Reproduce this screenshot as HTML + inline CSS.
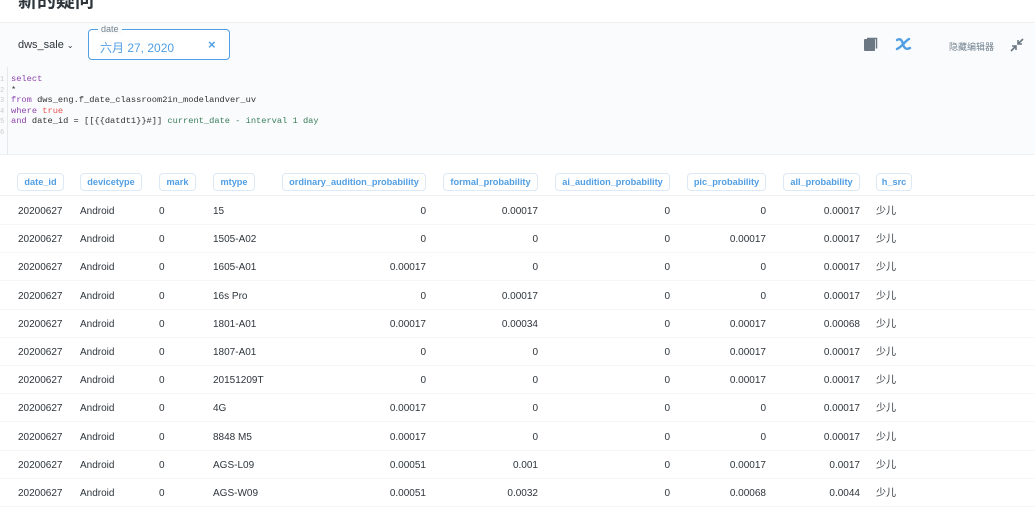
<!DOCTYPE html>
<html><head><meta charset="utf-8"><style>
*{margin:0;padding:0;box-sizing:border-box}
body{width:1035px;height:514px;overflow:hidden;background:#fff;font-family:"Liberation Sans","Noto Sans CJK SC",sans-serif;color:#2e353b;position:relative}
.a{position:absolute;white-space:nowrap}
.title{left:18px;top:-14px;font-size:19px;font-weight:bold;color:#2e353b}
.bar{left:0;top:22px;width:1035px;height:46px;background:#f9fbfc;border-top:1px solid #eef0f2;border-bottom:1px solid #eef0f2}
.ed{left:0;top:67px;width:1035px;height:88px;background:#f9fbfc;border-bottom:1px solid #eef0f2}
.code{font-family:"Liberation Mono",monospace;font-size:8.7px;line-height:10.6px;left:11px;top:74px;color:#333}
.ln{font-family:"Liberation Mono",monospace;font-size:7px;line-height:10.6px;left:0;top:75px;color:#ccc}
.pill{top:173px;height:18px;border:1px solid #dde9f5;border-radius:4px;color:#509ee3;font-size:9.2px;font-weight:bold;text-align:center;line-height:16px;overflow:hidden}
.c{font-size:10px;color:#2e353b;line-height:12px}
.r{text-align:right}
.hl{left:0;width:1035px;height:1px;background:#f4f6f8}
</style></head><body>
<div class="a title">新的疑问</div>
<div class="a bar"></div>
<div class="a" style="left:18px;top:39px;font-size:11px;color:#2e353b">dws_sale <span style="font-size:8px">⌄</span></div>
<div class="a" style="left:88px;top:29px;width:142px;height:31px;border:1.5px solid #509ee3;border-radius:4px;background:#fff"></div>
<div class="a" style="left:98px;top:24px;font-size:9px;color:#74838f;background:#f9fbfc;padding:0 3px">date</div>
<div class="a" style="left:100px;top:39px;font-size:12px;color:#509ee3">六月 27, 2020</div>
<div class="a" style="left:208px;top:37px;font-size:13px;color:#509ee3;font-weight:bold">×</div>
<svg class="a" style="left:864px;top:37px" width="14" height="15" viewBox="0 0 14 15"><rect x="0" y="2" width="11" height="12" rx="1" fill="#6b7883"/><path d="M3 1.5h9.5v10" stroke="#6b7883" stroke-width="1.5" fill="none"/></svg>
<svg class="a" style="left:895px;top:37px" width="18" height="14" viewBox="0 0 18 14"><path d="M2 3c3-2 5 0 6 4s3 6 7 4M14 2c-3 1-7 8-12 10" stroke="#509ee3" stroke-width="2.4" fill="none" stroke-linecap="round"/></svg>
<div class="a" style="left:949px;top:40px;font-size:9px;color:#74838f">隐藏编辑器</div>
<svg class="a" style="left:1010px;top:38px" width="14" height="14" viewBox="0 0 14 14"><path d="M13 1L8.5 5.5M8 2v4h4M1 13l4.5-4.5M2 8h4v4" stroke="#6b7883" stroke-width="1.6" fill="none"/></svg>
<div class="a ed"></div>
<div class="a ln">1<br>2<br>3<br>4<br>5<br>6</div>
<div class="a" style="left:7px;top:67px;width:1px;height:88px;background:#e6e9ec"></div>
<div class="a code"><span style="color:#8e44ad">select</span><br>*<br><span style="color:#8e44ad">from</span> dws_eng.f_date_classroom2in_modelandver_uv<br><span style="color:#8e44ad">where</span> <span style="color:#e55">true</span><br><span style="color:#8e44ad">and</span> date_id = [[{{datdt1}}#]] <span style="color:#3a7d5a">current_date - interval 1 day</span></div>
<div class="a pill" style="left:17px;width:47px">date_id</div>
<div class="a pill" style="left:80px;width:62px">devicetype</div>
<div class="a pill" style="left:159px;width:37px">mark</div>
<div class="a pill" style="left:213px;width:42px">mtype</div>
<div class="a pill" style="left:282px;width:144px">ordinary_audition_probability</div>
<div class="a pill" style="left:443px;width:95px">formal_probability</div>
<div class="a pill" style="left:555px;width:115px">ai_audition_probability</div>
<div class="a pill" style="left:687px;width:79px">pic_probability</div>
<div class="a pill" style="left:783px;width:77px">all_probability</div>
<div class="a pill" style="left:876px;width:36px">h_src</div>
<div class="a hl" style="top:195px;background:#eef1f4"></div>
<div id="rows"></div>
<script>
var d=[["15","0","0.00017","0","0","0.00017"],["1505-A02","0","0","0","0.00017","0.00017"],["1605-A01","0.00017","0","0","0","0.00017"],["16s Pro","0","0.00017","0","0","0.00017"],["1801-A01","0.00017","0.00034","0","0.00017","0.00068"],["1807-A01","0","0","0","0.00017","0.00017"],["20151209T","0","0","0","0.00017","0.00017"],["4G","0.00017","0","0","0","0.00017"],["8848 M5","0.00017","0","0","0","0.00017"],["AGS-L09","0.00051","0.001","0","0.00017","0.0017"],["AGS-W09","0.00051","0.0032","0","0.00068","0.0044"]];
var rx=[426,538,670,766,860],h="";
d.forEach(function(r,i){var y=206+i*28.2;
h+='<div class="a c" style="left:18px;top:'+y+'px">20200627</div><div class="a c" style="left:80px;top:'+y+'px">Android</div><div class="a c" style="left:159px;top:'+y+'px">0</div><div class="a c" style="left:213px;top:'+y+'px">'+r[0]+'</div>';
for(var k=0;k<5;k++)h+='<div class="a c r" style="left:'+(rx[k]-100)+'px;width:100px;top:'+y+'px">'+r[k+1]+'</div>';
h+='<div class="a c" style="left:876px;top:'+y+'px;height:12px">少儿</div><div class="a hl" style="top:'+(y+18)+'px"></div>';});
document.getElementById('rows').innerHTML=h;
</script>
</body></html>
